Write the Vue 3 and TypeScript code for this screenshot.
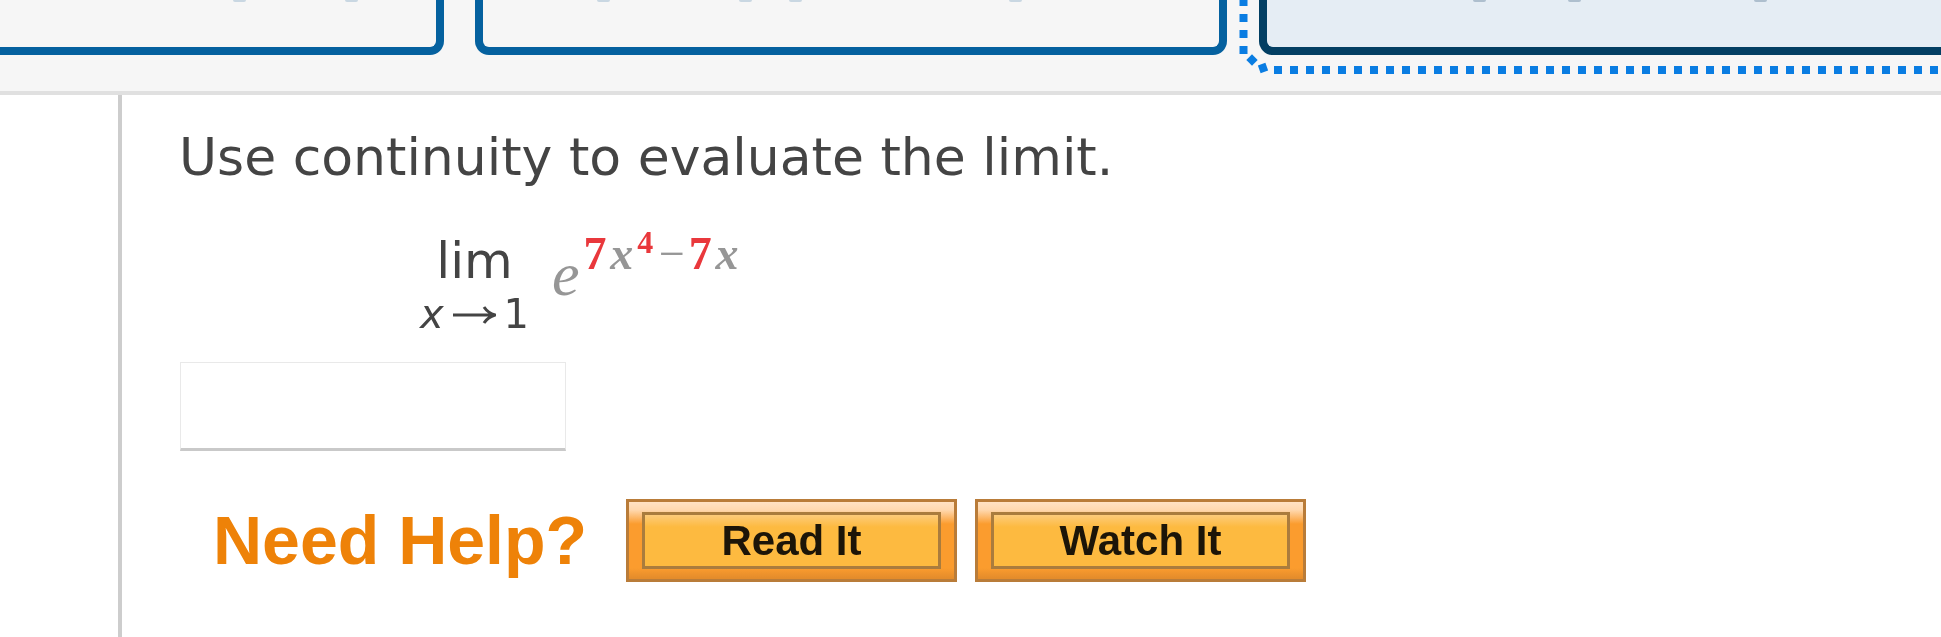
<script setup lang="ts">
interface Tab {
  id: string
  ticks: number[]
}

const tabs: Tab[] = [
  { id: 'first', ticks: [251, 363] },
  { id: 'second', ticks: [120, 262, 312, 532] },
  { id: 'current', ticks: [212, 307, 493] },
]
const helpButtons: string[] = ['Read It', 'Watch It']
</script>

<template>
  <div class="page">
    <header class="tabbar">
      <div v-for="tab in tabs" :key="tab.id" class="tab" :class="`tab-${tab.id}`">
        <i v-for="t in tab.ticks" :key="t" class="tick" :style="{ left: `${t}px` }"></i>
        <svg v-if="tab.id === 'current'" class="focus-ring" width="720" height="90" viewBox="-20 0 720 90" aria-hidden="true">
          <path d="M-15.5 -2 V54" class="ring" />
          <rect x="-11" y="56" width="8" height="8" transform="rotate(45 -7 60)" fill="#0a7de2" />
          <rect x="0" y="64" width="8" height="8" transform="rotate(70 4 68)" fill="#0a7de2" />
          <path d="M15 70 H700" class="ring" />
        </svg>
      </div>
    </header>
    <main class="question">
      <p class="prompt">Use continuity to evaluate the limit.</p>
      <div class="math">
        <div class="limit">
          <span class="lim">lim</span>
          <span class="under">
            <em>x</em>
            <svg class="arrow" width="44" height="20" viewBox="0 0 44 20" aria-hidden="true">
              <path d="M1 10 H42 M32 2 Q36 8 43 10 Q36 12 32 18" fill="none" stroke="#444" stroke-width="3" />
            </svg>
            <span>1</span>
          </span>
        </div>
        <div class="expr">
          <span class="base">e</span>
          <span class="power"><b class="red">7</b><em>x</em><sup class="red">4</sup><span class="minus">−</span><b class="red">7</b><em>x</em></span>
        </div>
      </div>
      <input class="answer" type="text" aria-label="Answer" />
      <div class="help">
        <span class="help-label">Need Help?</span>
        <button v-for="label in helpButtons" :key="label" class="help-btn" type="button">
          <span class="help-btn-inner">{{ label }}</span>
        </button>
      </div>
    </main>
  </div>
</template>

<style>
html, body { margin: 0; background: #fff; overflow: hidden; }
</style>

<style scoped>
.page {
  width: 1941px;
  height: 637px;
  display: flex;
  flex-direction: column;
  overflow: hidden;
  background: #fff;
}
.tabbar {
  height: 91px;
  flex: none;
  display: flex;
  align-items: flex-start;
  gap: 32px;
  background: #f6f6f6;
  border-bottom: 4px solid #e0e0e0;
  margin-left: -20px;
  overflow: hidden;
}
.tab {
  position: relative;
  flex: none;
  box-sizing: border-box;
  height: 55px;
  border: 8px solid #05619f;
  border-top: 0;
  border-radius: 0 0 14px 14px;
}
.tab-first { width: 464px; }
.tab-second { width: 752px; margin-left: -1px; }
.tab-current {
  width: 720px;
  border-color: #033f63;
  background: #e5edf4;
  border-right: 0;
  border-bottom-right-radius: 0;
}
.tick {
  position: absolute;
  top: 0;
  width: 13px;
  height: 2px;
  margin-left: -6px;
  border-radius: 0 0 6px 6px;
  background: #c9d7e2;
  filter: blur(0.5px);
}
.tab-current .tick { background: #aebfce; }
.focus-ring {
  position: absolute;
  left: -28px;
  top: 0;
  overflow: visible;
}
.ring {
  fill: none;
  stroke: #0a7de2;
  stroke-width: 8;
  stroke-dasharray: 8 8;
}
.question {
  flex: 1;
  margin-left: 118px;
  border-left: 4px solid #cdcdcd;
  padding-left: 59px;
  color: #444;
  font-family: "DejaVu Sans", Verdana, sans-serif;
}
.prompt {
  margin: 0 0 0 -2px;
  padding-top: 32px;
  font-size: 52px;
  line-height: 60px;
  filter: blur(0.5px);
}
.math {
  display: flex;
  align-items: flex-start;
  margin: 49px 0 0 231px;
  filter: blur(0.6px);
}
.limit {
  display: flex;
  flex-direction: column;
  align-items: center;
  width: 125px;
}
.lim { font-size: 50px; line-height: 50px; margin-bottom: 8px; }
.under {
  display: flex;
  align-items: center;
  gap: 8px;
  font-size: 40px;
  line-height: 40px;
  white-space: nowrap;
}
.under em { font-style: italic; }
.arrow { flex: none; margin-top: 2px; }
.expr {
  display: flex;
  align-items: flex-start;
  margin-left: 15px;
  font-family: "Liberation Serif", "DejaVu Serif", serif;
  color: #969696;
}
.base { font-size: 62px; font-style: italic; line-height: 62px; margin-top: 7px; }
.power {
  display: flex;
  align-items: flex-start;
  font-size: 46px;
  line-height: 46px;
  letter-spacing: 3.8px;
  margin: -5px 0 0 4px;
  white-space: nowrap;
}
.power em { font-style: italic; font-weight: 700; }
.power b { font-weight: 700; }
.power sup { font-size: 32px; font-weight: 700; line-height: 32px; margin: -5px 2px 0 0; vertical-align: baseline; }
.minus { margin-right: 0; }
.red { color: #e9383c; }
.answer {
  display: block;
  box-sizing: border-box;
  width: 386px;
  height: 89px;
  margin: 28px 0 0 -1px;
  padding: 0;
  border: 1px solid #e9e9e9;
  border-bottom: 3px solid #c9c9c9;
  background: #fff;
  outline: none;
}
.help {
  display: flex;
  align-items: center;
  gap: 18px;
  margin: 48px 0 0 32px;
}
.help-label {
  width: 395px;
  flex: none;
  font-family: "Liberation Sans", Arial, sans-serif;
  font-size: 68px;
  font-weight: 700;
  line-height: 83px;
  color: #ee8208;
  filter: blur(0.7px);
}
.help-btn {
  box-sizing: border-box;
  width: 331px;
  height: 83px;
  padding: 10px 13px 10px;
  border: 3px solid #b97c39;
  background: linear-gradient(#ffe2c4 0, #ffd8ae 8px, #fb9c2e 22px, #fb9c2e 66px, #e48c2b 76px);
  font-family: "Liberation Sans", Arial, sans-serif;
  cursor: pointer;
  filter: blur(0.7px);
}
.help-btn-inner {
  display: flex;
  align-items: center;
  justify-content: center;
  box-sizing: border-box;
  height: 100%;
  border: 3px solid #aa7c3d;
  background: linear-gradient(#fdcb7a 0, #fdba40 12px);
  font-size: 42px;
  font-weight: 700;
  color: #1c1508;
}
</style>
